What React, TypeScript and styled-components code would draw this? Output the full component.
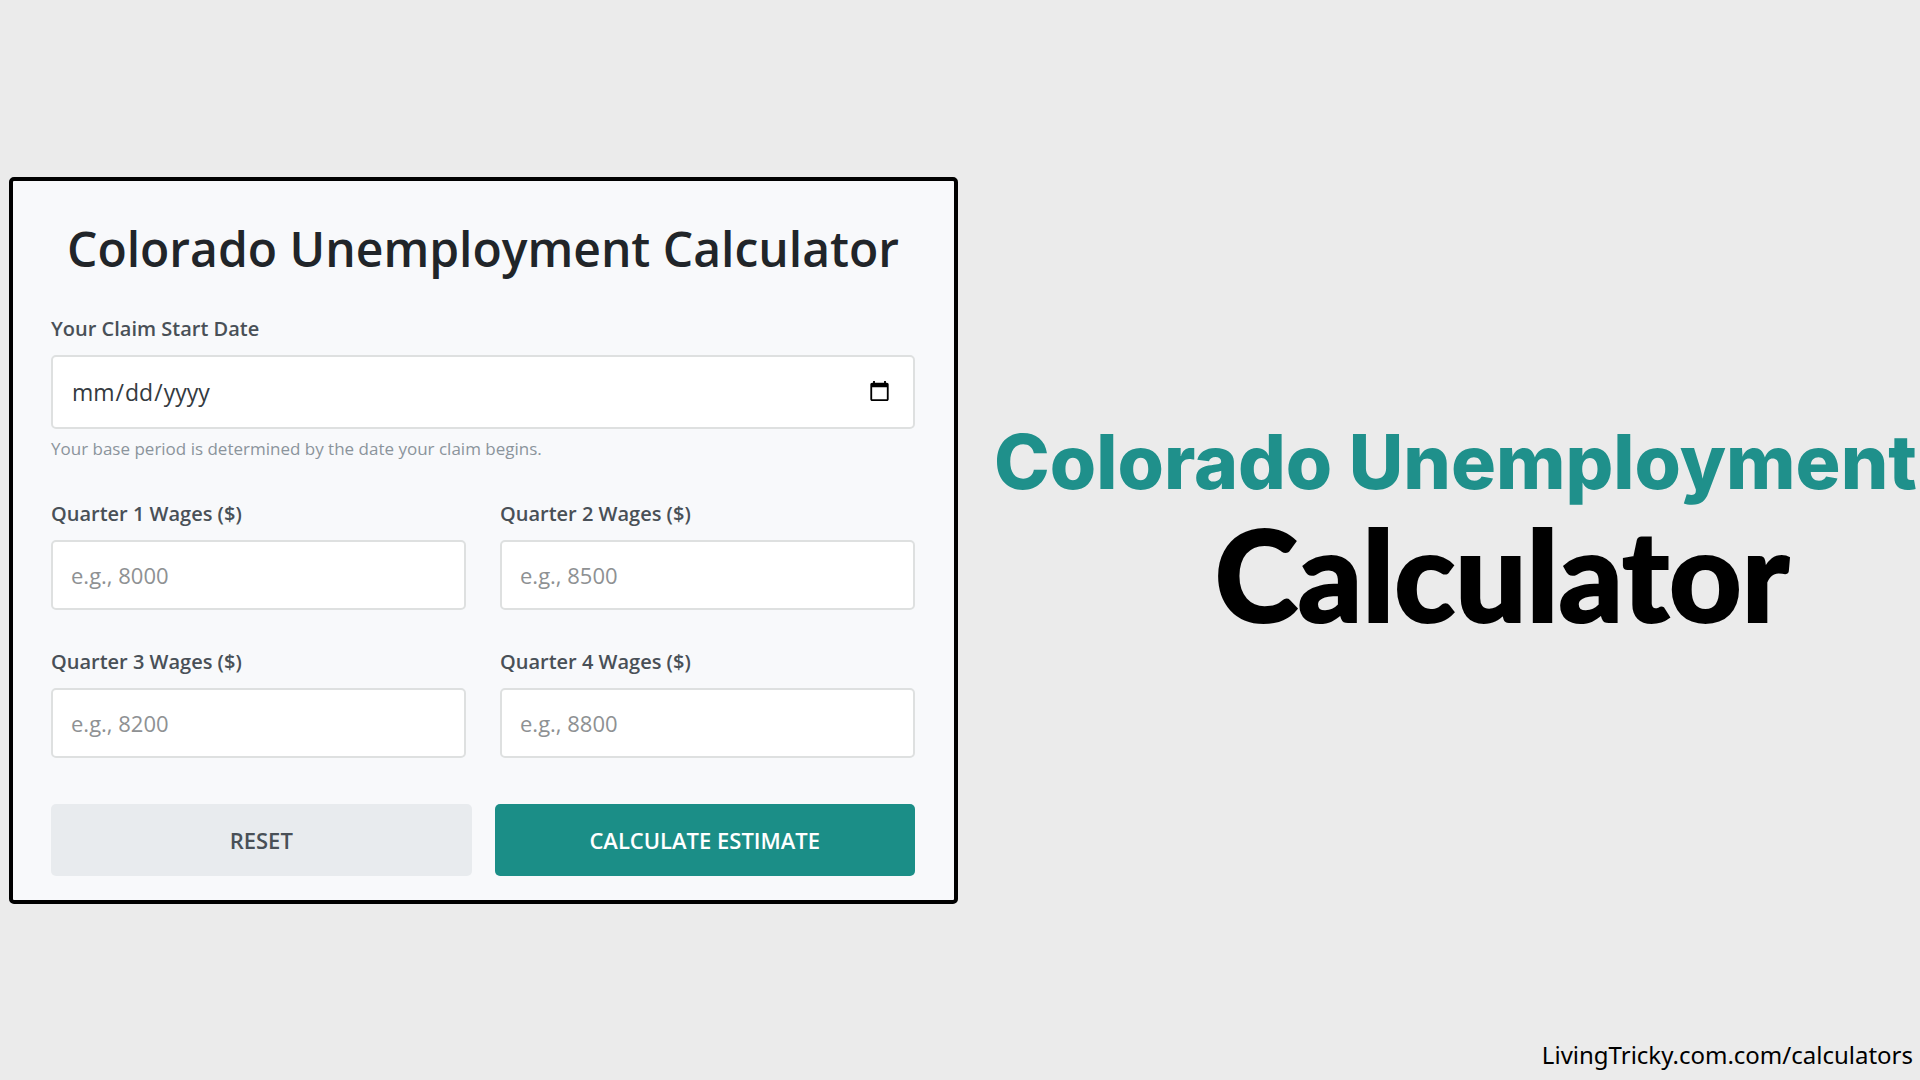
import React, { useState } from "react";
import styled, { createGlobalStyle, css } from "styled-components";

const GlobalStyle = createGlobalStyle`
  *, *::before, *::after { box-sizing: border-box; }
  body {
    margin: 0;
    background: #ebebeb;
    color: #212529;
    font-family: "Open Sans", "Noto Sans", sans-serif;
  }
`;

const Page = styled.div`
  display: grid;
  grid-template-rows: 1fr auto 1fr;
  min-height: 100vh;
  overflow: hidden;
`;

const Main = styled.main`
  grid-row: 2;
  display: grid;
  grid-template-columns: minmax(0, 949fr) minmax(0, 926fr);
  column-gap: 36px;
  align-items: center;
  padding-left: 9px;
`;

const Card = styled.form`
  padding: 38px 39px 24px 38px;
  border: 4px solid #000;
  border-radius: 5px;
  background: #f8f9fb;
`;

const CardTitle = styled.h1`
  margin: 0 0 36px;
  font-size: 48px;
  font-weight: 600;
  line-height: 60px;
  text-align: center;
  white-space: nowrap;
`;

const Field = styled.div`
  display: flex;
  flex-direction: column;
`;

const Label = styled.label`
  margin-bottom: 12px;
  color: #495057;
  font-size: 20px;
  font-weight: 600;
  line-height: 28px;
`;

const inputBox = css`
  width: 100%;
  border: 2px solid #dee0e0;
  border-radius: 5px;
  background: #fff;
  color: #343a40;
  font-family: inherit;
`;

const DateInput = styled.input`
  ${inputBox}
  height: 74px;
  padding: 0 20px 0 18px;
  font-size: 23px;
`;

const WageInput = styled.input`
  ${inputBox}
  height: 70px;
  padding: 0 18px;
  font-size: 22px;

  &::placeholder {
    color: #8e9193;
    opacity: 1;
  }
`;

const Hint = styled.p`
  margin: 8px 0 0;
  color: #8b949c;
  font-size: 17px;
  line-height: 24px;
`;

const WageGrid = styled.div`
  display: grid;
  grid-template-columns: 1fr 1fr;
  gap: 38px 34px;
  margin-top: 39px;
`;

const Actions = styled.div`
  display: grid;
  grid-template-columns: 1fr 1fr;
  gap: 23px;
  margin-top: 46px;
`;

const Button = styled.button<{ $primary?: boolean }>`
  height: 72px;
  border: 0;
  border-radius: 5px;
  background: ${(p) => (p.$primary ? "#1b8e87" : "#e8ebee")};
  color: ${(p) => (p.$primary ? "#fff" : "#495057")};
  font-family: inherit;
  font-size: 22px;
  font-weight: 600;
  text-transform: uppercase;
  cursor: pointer;
`;

const Hero = styled.h2`
  display: flex;
  flex-direction: column;
  margin: 0;
  padding-bottom: 28px;
  color: #000;
  white-space: nowrap;
`;

const HeroTopic = styled.span`
  color: #1f908b;
  font-family: Inter, sans-serif;
  font-size: 75px;
  font-weight: 800;
  line-height: 96px;
`;

const HeroName = styled.span`
  padding-left: 90px;
  font-family: Lato, sans-serif;
  font-size: 126px;
  font-weight: 900;
  line-height: 128px;
  text-align: center;
  -webkit-text-stroke: 2px #000;
`;

const Footer = styled.footer`
  grid-row: 3;
  align-self: end;
  padding: 0 7px 9px;
  text-align: right;
`;

const SiteLink = styled.a`
  color: #000;
  font-family: "Noto Sans", sans-serif;
  font-size: 24px;
  line-height: 32px;
  text-decoration: none;
`;

const quarters = [
  { id: "q1", label: "Quarter 1 Wages ($)", example: "e.g., 8000" },
  { id: "q2", label: "Quarter 2 Wages ($)", example: "e.g., 8500" },
  { id: "q3", label: "Quarter 3 Wages ($)", example: "e.g., 8200" },
  { id: "q4", label: "Quarter 4 Wages ($)", example: "e.g., 8800" },
];

export default function App() {
  const [wages, setWages] = useState<Record<string, string>>({});

  return (
    <>
      <GlobalStyle />
      <Page>
        <Main>
          <Card onSubmit={(e) => e.preventDefault()} onReset={() => setWages({})}>
            <CardTitle>Colorado Unemployment Calculator</CardTitle>
            <Field>
              <Label htmlFor="claim-date">Your Claim Start Date</Label>
              <DateInput id="claim-date" type="date" aria-describedby="claim-hint" />
              <Hint id="claim-hint">Your base period is determined by the date your claim begins.</Hint>
            </Field>
            <WageGrid>
              {quarters.map((q) => (
                <Field key={q.id}>
                  <Label htmlFor={q.id}>{q.label}</Label>
                  <WageInput
                    id={q.id}
                    inputMode="decimal"
                    placeholder={q.example}
                    value={wages[q.id] ?? ""}
                    onChange={(e) => setWages({ ...wages, [q.id]: e.target.value })}
                  />
                </Field>
              ))}
            </WageGrid>
            <Actions>
              <Button type="reset">Reset</Button>
              <Button type="submit" $primary>Calculate Estimate</Button>
            </Actions>
          </Card>
          <Hero>
            <HeroTopic>Colorado Unemployment</HeroTopic>
            <HeroName>Calculator</HeroName>
          </Hero>
        </Main>
        <Footer>
          <SiteLink href="#calculators">LivingTricky.com.com/calculators</SiteLink>
        </Footer>
      </Page>
    </>
  );
}
